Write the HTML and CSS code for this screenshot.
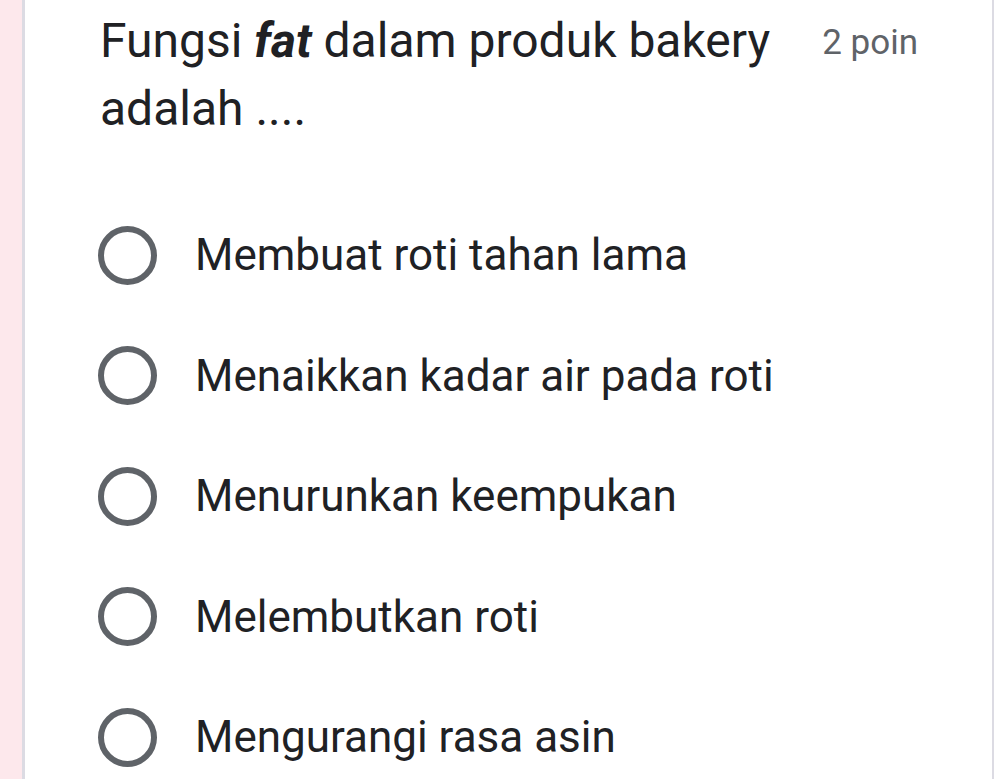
FILE: index.html
```html
<!DOCTYPE html>
<html lang="id">
<head>
<meta charset="utf-8">
<title>Pertanyaan</title>
<link rel="stylesheet" href="styles.css">
</head>
<body>
<div class="page">
  <div class="card">
    <div class="header">
      <div class="title">Fungsi <b><i>fat</i></b> dalam produk bakery adalah ....</div>
      <div class="points">2 poin</div>
    </div>
    <div class="options">
      <label class="option"><span class="radio"></span><span class="label">Membuat roti tahan lama</span></label>
      <label class="option"><span class="radio"></span><span class="label">Menaikkan kadar air pada roti</span></label>
      <label class="option"><span class="radio"></span><span class="label">Menurunkan keempukan</span></label>
      <label class="option"><span class="radio"></span><span class="label">Melembutkan roti</span></label>
      <label class="option"><span class="radio"></span><span class="label">Mengurangi rasa asin</span></label>
    </div>
  </div>
</div>
</body>
</html>
```
FILE: styles.css
```css
html, body {
  margin: 0;
  padding: 0;
  height: 100%;
  overflow: hidden;
}
body {
  background: #fde8ec;
  font-family: Roboto, "Noto Sans", sans-serif;
  color: #202124;
}
.page {
  height: 100%;
  padding-left: 22px;
  box-sizing: border-box;
}
.card {
  height: 100%;
  background: #ffffff;
  border-left: 3px solid #dcdbe3;
  border-right: 2px solid #dcdbe3;
  box-sizing: border-box;
  padding: 7px 74px 0 75px;
}
.header {
  display: flex;
  align-items: flex-start;
}
.title {
  max-width: 700px;
  font-size: 48px;
  line-height: 68px;
  color: #202124;
}
.title b {
  font-weight: 700;
}
.points {
  margin-left: auto;
  font-size: 35px;
  line-height: 40px;
  padding-top: 16px;
  color: #5f6368;
  white-space: nowrap;
}
.options {
  margin-top: 52px;
  display: flex;
  flex-direction: column;
}
.option {
  height: 120.5px;
  display: flex;
  align-items: center;
}
.radio {
  width: 47px;
  height: 47px;
  border: 6px solid #5f6368;
  border-radius: 50%;
  flex: none;
  margin-left: -2px;
}
.label {
  margin-left: 38px;
  font-size: 44px;
  color: #202124;
}
```
